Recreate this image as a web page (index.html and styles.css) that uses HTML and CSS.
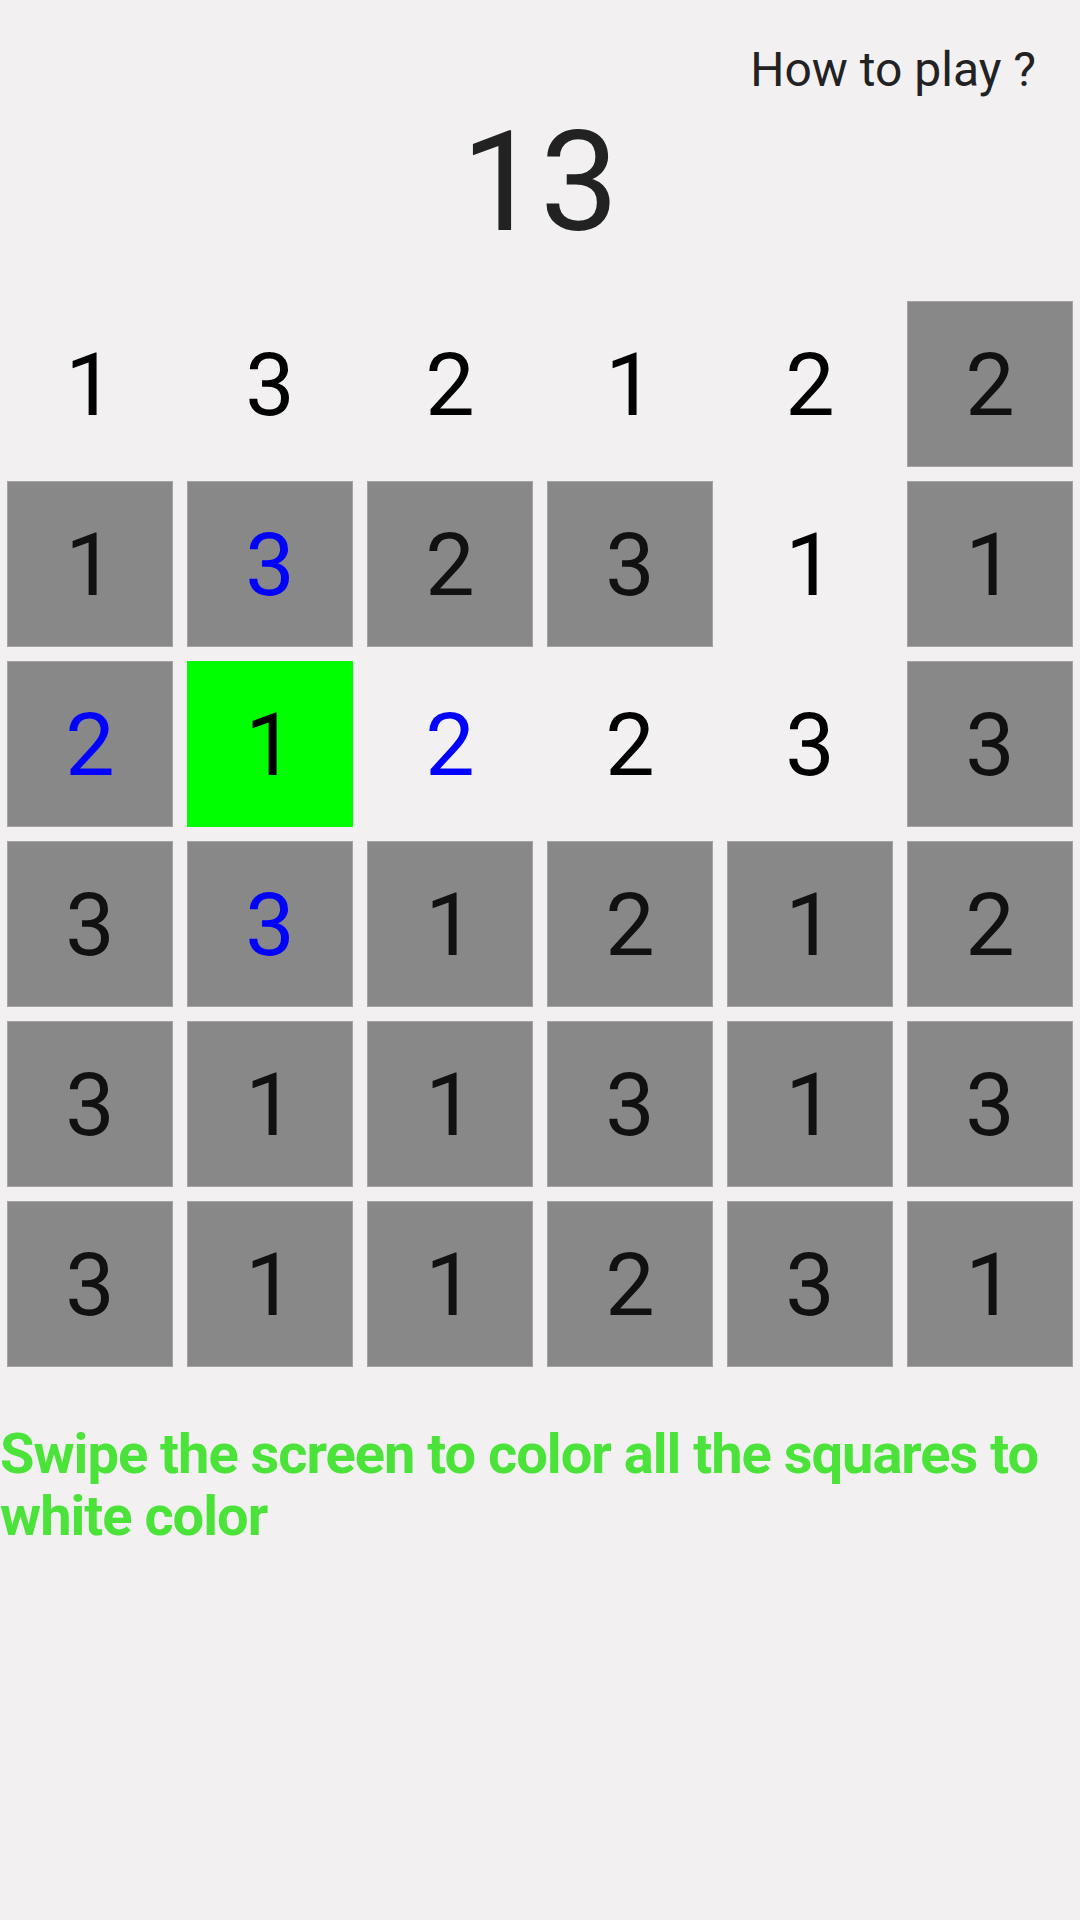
FILE: index.html
```html
<!DOCTYPE html>
<html>
  <head>
    <title>Squares</title>
    <meta charset="UTF-8" />
    <link rel="stylesheet" href="styles.css">
  </head>
  <body>
    <div class="screen">
      <div class="help">How to play ?</div>
      <div class="score">13</div>
      <div class="board">
        <div class="cell white">1</div>
        <div class="cell white">3</div>
        <div class="cell white">2</div>
        <div class="cell white">1</div>
        <div class="cell white">2</div>
        <div class="cell">2</div>

        <div class="cell">1</div>
        <div class="cell blue">3</div>
        <div class="cell">2</div>
        <div class="cell">3</div>
        <div class="cell white">1</div>
        <div class="cell">1</div>

        <div class="cell blue">2</div>
        <div class="cell current">1</div>
        <div class="cell white blue">2</div>
        <div class="cell white">2</div>
        <div class="cell white">3</div>
        <div class="cell">3</div>

        <div class="cell">3</div>
        <div class="cell blue">3</div>
        <div class="cell">1</div>
        <div class="cell">2</div>
        <div class="cell">1</div>
        <div class="cell">2</div>

        <div class="cell">3</div>
        <div class="cell">1</div>
        <div class="cell">1</div>
        <div class="cell">3</div>
        <div class="cell">1</div>
        <div class="cell">3</div>

        <div class="cell">3</div>
        <div class="cell">1</div>
        <div class="cell">1</div>
        <div class="cell">2</div>
        <div class="cell">3</div>
        <div class="cell">1</div>
      </div>
      <div class="hint">Swipe the screen to color all the squares to white color</div>
    </div>
  </body>
</html>
```

FILE: styles.css
```css
body,
html {
  margin: 0;
  padding: 0;
  height: 100%;
  font-family: Roboto, "Liberation Sans", sans-serif;
  background-color: #f2f0f1;
  color: #222222;
}

.screen {
  width: 1080px;
  height: 1920px;
}

.help {
  padding: 42px 44px 0 0;
  text-align: right;
  font-size: 48px;
  line-height: 56px;
}

.score {
  margin-top: 14px;
  text-align: center;
  font-size: 140px;
  line-height: 140px;
}

.board {
  margin-top: 49px;
  padding: 0 7px;
  display: grid;
  grid-template-columns: repeat(6, 166px);
  grid-auto-rows: 166px;
  gap: 14px;
}

.cell {
  box-sizing: border-box;
  display: flex;
  justify-content: center;
  align-items: center;
  font-size: 88px;
  color: #111111;
  background-color: #888888;
  border: 1px solid #a4a4a4;
}

.cell.white {
  background-color: transparent;
  border-color: transparent;
  color: #000000;
}

.cell.current {
  background-color: #00ff00;
  border-color: #00ff00;
  color: #000000;
}

.cell.blue {
  color: #0000ff;
}

.hint {
  margin-top: 56px;
  font-size: 56px;
  line-height: 62px;
  font-weight: bold;
  letter-spacing: -1px;
  color: #4be33a;
}
```
